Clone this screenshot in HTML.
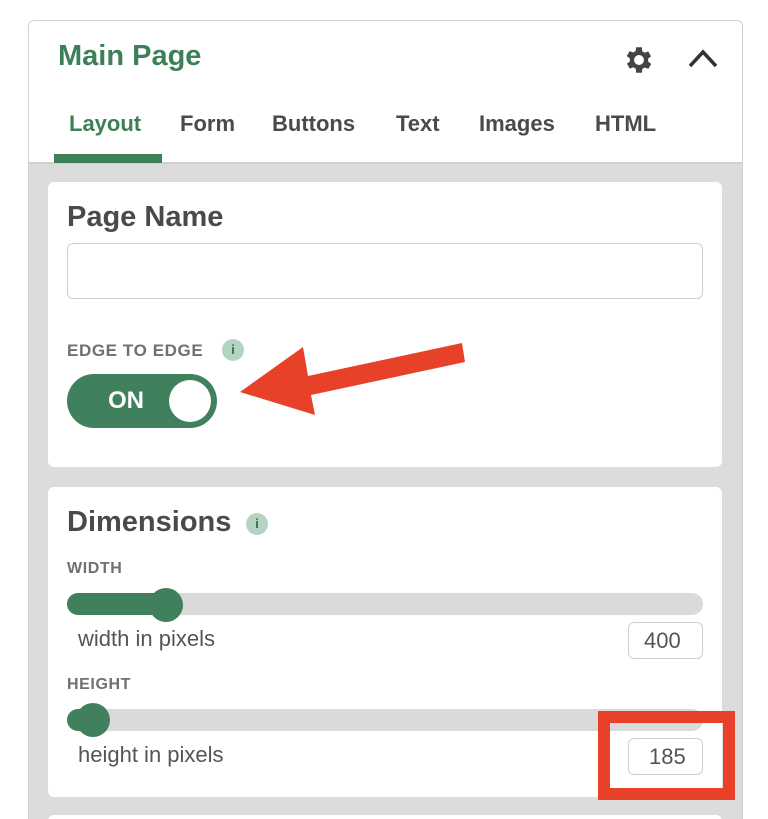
<!DOCTYPE html>
<html style="height:819px;overflow:hidden"><head><style>
body{margin:0;width:768px;height:819px;background:#fff;font-family:"Liberation Sans",sans-serif;position:relative;overflow:hidden}
.abs{position:absolute}
.panel{left:28px;top:20px;width:713px;height:820px;border:1px solid #d0d0d0;border-radius:6px;background:#dcdcdc;overflow:hidden}
.head{left:0;top:0;width:713px;height:141px;background:#fff;border-bottom:2px solid #cfcfcf}
.card{background:#fff;border-radius:6px;position:absolute}
.t{position:absolute;white-space:nowrap}
.lbl{color:#707070;font-weight:bold;font-size:16px;letter-spacing:0.6px}
.inp{position:absolute;border:1.5px solid #cfcfcf;border-radius:6px;background:#fff}
.info{position:absolute;width:22px;height:22px;border-radius:50%;background:#b4d4c2;color:#2f6e4a;font-size:13px;font-weight:bold;text-align:center;line-height:22px}
.track{position:absolute;height:22px;border-radius:11px;background:#dadada}
</style></head><body>
<div class="abs panel">
 <div class="abs head">
  <div class="t" style="left:29px;top:19px;font-size:29px;font-weight:bold;color:#3d8058">Main Page</div>
  <svg class="abs" style="left:593px;top:22px" width="34" height="34" viewBox="0 0 24 24"><path fill="#444" d="M19.4 13a7.6 7.6 0 0 0 0-2l2.1-1.6-2-3.5-2.5 1a7.4 7.4 0 0 0-1.7-1L15 3h-4l-.4 2.7a7.4 7.4 0 0 0-1.7 1l-2.5-1-2 3.5L6.6 11a7.6 7.6 0 0 0 0 2l-2.1 1.6 2 3.5 2.5-1a7.4 7.4 0 0 0 1.7 1L11 21h4l.4-2.7a7.4 7.4 0 0 0 1.7-1l2.5 1 2-3.5zM13 15.5a3.5 3.5 0 1 1 0-7 3.5 3.5 0 0 1 0 7z" transform="translate(-1 0)"/></svg>
  <svg class="abs" style="left:659px;top:26px" width="30" height="22" viewBox="0 0 30 22"><path d="M2 19 L15 5 L28 19" fill="none" stroke="#333" stroke-width="3.5"/></svg>
  <div class="t" style="left:40px;top:90px;font-size:22px;font-weight:bold;color:#3d8058">Layout</div>
  <div class="t" style="left:151px;top:90px;font-size:22px;font-weight:bold;color:#4a4a4a">Form</div>
  <div class="t" style="left:243px;top:90px;font-size:22px;font-weight:bold;color:#4a4a4a">Buttons</div>
  <div class="t" style="left:367px;top:90px;font-size:22px;font-weight:bold;color:#4a4a4a">Text</div>
  <div class="t" style="left:450px;top:90px;font-size:22px;font-weight:bold;color:#4a4a4a">Images</div>
  <div class="t" style="left:566px;top:90px;font-size:22px;font-weight:bold;color:#4a4a4a">HTML</div>
  <div class="abs" style="left:25px;top:133px;width:108px;height:9px;background:#3d8058"></div>
 </div>
</div>
<div class="card" style="left:48px;top:182px;width:674px;height:285px">
 <div class="t" style="left:19px;top:19px;font-size:29px;font-weight:bold;color:#4a4a4a">Page Name</div>
 <div class="inp" style="left:19px;top:61px;width:634px;height:54px"></div>
 <div class="t lbl" style="left:19px;top:159px;font-size:17px">EDGE TO EDGE</div>
 <div class="info" style="left:174px;top:157px">i</div>
 <div class="abs" style="left:19px;top:192px;width:150px;height:54px;border-radius:27px;background:#40805c"></div>
 <div class="t" style="left:60px;top:205px;font-size:24px;font-weight:bold;color:#fff">ON</div>
 <div class="abs" style="left:121px;top:198px;width:42px;height:42px;border-radius:50%;background:#fff"></div>
</div>
<div class="card" style="left:48px;top:487px;width:674px;height:310px">
 <div class="t" style="left:19px;top:19px;font-size:29px;font-weight:bold;color:#4a4a4a">Dimensions</div>
 <div class="info" style="left:198px;top:26px">i</div>
 <div class="t lbl" style="left:19px;top:73px">WIDTH</div>
 <div class="track" style="left:19px;top:106px;width:636px"></div>
 <div class="abs" style="left:19px;top:106px;width:100px;height:22px;border-radius:11px;background:#40805c"></div>
 <div class="abs" style="left:101px;top:101px;width:34px;height:34px;border-radius:50%;background:#40805c"></div>
 <div class="t" style="left:30px;top:139px;font-size:22px;color:#555">width in pixels</div>
 <div class="inp" style="left:580px;top:135px;width:73px;height:35px"></div>
 <div class="t" style="left:596px;top:141px;font-size:22px;color:#555">400</div>
 <div class="t lbl" style="left:19px;top:189px">HEIGHT</div>
 <div class="track" style="left:19px;top:222px;width:636px"></div>
 <div class="abs" style="left:19px;top:222px;width:30px;height:22px;border-radius:11px;background:#40805c"></div>
 <div class="abs" style="left:28px;top:216px;width:34px;height:34px;border-radius:50%;background:#40805c"></div>
 <div class="t" style="left:30px;top:255px;font-size:22px;color:#555">height in pixels</div>
 <div class="inp" style="left:580px;top:251px;width:73px;height:35px"></div>
 <div class="t" style="left:601px;top:257px;font-size:22px;color:#555">185</div>
</div>
<div class="card" style="left:48px;top:815px;width:674px;height:20px"></div>
<div class="abs" style="left:598px;top:711px;width:113px;height:65px;border:12px solid #e8412a"></div>
<svg class="abs" style="left:0;top:0" width="768" height="819"><polygon fill="#e8412a" points="240,392 303,347 308,376 462,343 465,362 311,395 315,415"/></svg>
</body></html>
